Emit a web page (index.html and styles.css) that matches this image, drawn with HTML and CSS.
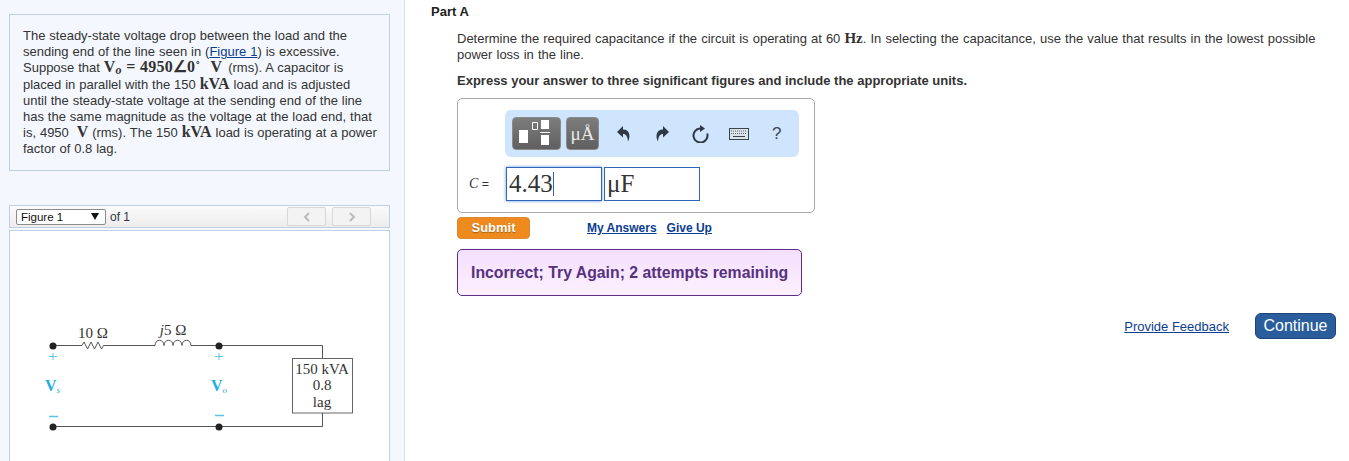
FILE: index.html
```html
<!DOCTYPE html>
<html lang="en">
<head>
<meta charset="utf-8">
<title>Part A</title>
<link rel="stylesheet" href="styles.css">
</head>
<body>
<div class="page">
  <aside class="left">
    <div class="problem">The steady-state voltage drop between the load and the<br>sending end of the line seen in (<a href="#">Figure 1</a>) is excessive.<br>Suppose that <span class="m wide-m"><b>V</b><b class="sub">o</b> = 4950∠0<sup>∘</sup>&nbsp;&nbsp;V</span> (rms). A capacitor is<br>placed in parallel with the 150 <span class="m">kVA</span> load and is adjusted<br>until the steady-state voltage at the sending end of the line<br>has the same magnitude as the voltage at the load end, that<br>is, 4950 &nbsp;<span class="m">V</span> (rms). The 150 <span class="m">kVA</span> load is operating at a power<br>factor of 0.8 lag.</div>
    <div class="figbar">
      <div class="figselect"><span>Figure 1</span><i class="caret"></i></div>
      <span class="ofone">of 1</span>
      <div class="pager">
        <span class="pagebtn"><svg width="8" height="10" viewBox="0 0 8 10"><path d="M6 1 2 5l4 4" fill="none" stroke="#bbb" stroke-width="2"/></svg></span>
        <span class="pagebtn"><svg width="8" height="10" viewBox="0 0 8 10"><path d="M2 1l4 4-4 4" fill="none" stroke="#bbb" stroke-width="2"/></svg></span>
      </div>
    </div>
    <div class="figpanel">
      <svg class="circuit" width="340" height="120" viewBox="0 0 340 120">
        <g fill="none" stroke="#555" stroke-width="1">
          <path d="M36 14.500H66l2-3.500 3.500 7 3.500-7 3.500 7 3.500-7 3.500 7 2-3.500H139"/>
          <path d="M139 14.500c0-7 9-7 9 0c0-7 9-7 9 0c0-7 9-7 9 0c0-7 9-7 9 0H306.500V27"/>
          <path d="M36 95.500H306.500V82"/>
          <rect x="276.500" y="27.500" width="60" height="54.500" stroke="#666"/>
        </g>
        <g fill="#222">
          <circle cx="37" cy="15" r="3.500"/><circle cx="203" cy="15" r="3.500"/>
          <circle cx="37" cy="96" r="3.500"/><circle cx="203" cy="96" r="3.500"/>
        </g>
        <g stroke="#5cc3e8" stroke-width="1" fill="none">
          <path d="M33 25.500h8M37 22v7M199 25.500h8M203 22v7"/>
          <path d="M33 85.500h9M199 84.500h9" stroke-width="1.500"/>
        </g>
        <g class="ctext">
          <text x="77" y="7" text-anchor="middle">10 Ω</text>
          <text x="157" y="4" text-anchor="middle"><tspan font-style="italic">j</tspan>5 Ω</text>
          <text x="306" y="43" text-anchor="middle">150 kVA</text>
          <text x="306" y="59" text-anchor="middle">0.8</text>
          <text x="306" y="76" text-anchor="middle">lag</text>
        </g>
        <g class="cvolt">
          <text x="29" y="60">V<tspan class="csub" dy="2">s</tspan></text>
          <text x="195" y="60">V<tspan class="csub" dy="2">o</tspan></text>
        </g>
      </svg>
    </div>
  </aside>
  <main class="right">
    <h2 class="parthead">Part A</h2>
    <div class="content">
      <p class="question">Determine the required capacitance if the circuit is operating at 60 <span class="hz">Hz</span>. In selecting the capacitance, use the value that results in the lowest possible power loss in the line.</p>
      <p class="express">Express your answer to three significant figures and include the appropriate units.</p>
      <div class="answerbox">
        <div class="tools">
          <span class="tbtn wide">
            <svg width="41" height="27" viewBox="0 0 41 27"><path fill="#fff" d="M3 10h9v13H3zM25 0h8v9h-8zM25 15h8v10h-8zM24 12h10v1H24z"/><path fill="none" stroke="#fff" d="M16.500 2.500h5v7h-5z"/></svg>
          </span>
          <span class="tbtn narrow">μÅ</span>
          <svg class="ticon undo" width="14" height="16" viewBox="0 0 14 16"><path fill="#2d3a45" d="M6 0 0 6l6 5.500V8c3 0 4.500 2 5 7.500 2.500-4 2.500-12-5-12z"/></svg>
          <svg class="ticon redo" width="14" height="16" viewBox="0 0 14 16"><path fill="#2d3a45" d="M8 0l6 6-6 5.500V8c-3 0-4.500 2-5 7.500-2.500-4-2.500-12 5-12z"/></svg>
          <svg class="ticon reset" width="18" height="19" viewBox="0 0 18 19"><path fill="none" stroke="#2d3a45" stroke-width="2" d="M15.200 9.500A7 7 0 1 1 8 4.550"/><path fill="#2d3a45" d="M8 1l5 3.500L8 8z"/></svg>
          <svg class="ticon keys" width="20" height="12" viewBox="0 0 20 12"><rect x=".5" y=".5" width="19" height="11" fill="#dbe3ea" stroke="#39444e"/><path stroke="#5a6670" stroke-dasharray="1 1" d="M2 3h16M2 5.500h16"/><path stroke="#39444e" d="M4 8.500h12"/></svg>
          <span class="help">?</span>
        </div>
        <div class="entry">
          <span class="varname"><i>C</i> =</span>
          <div class="field focus">4.43<i class="cursor"></i></div>
          <div class="field">μF</div>
        </div>
      </div>
      <div class="actions">
        <span class="submit">Submit</span>
        <a class="alink" href="#">My Answers</a>
        <a class="alink" href="#">Give Up</a>
      </div>
      <div class="feedback">Incorrect; Try Again; 2 attempts remaining</div>
    </div>
    <div class="bottom">
      <a class="provide" href="#">Provide Feedback</a>
      <span class="continue">Continue</span>
    </div>
  </main>
</div>
</body>
</html>
```

FILE: styles.css
```css
* { box-sizing: border-box; }
html, body { margin: 0; padding: 0; height: 100%; overflow: hidden; background: #fff; }
body { font-family: "Liberation Sans", Arial, sans-serif; font-size: 12px; color: #333; }
a { color: #0b3d91; }
.page { display: flex; height: 461px; }
.left { width: 405px; flex: none; padding: 14px 14px 0 9px; background: #f4f8fe; border-right: 1px solid #d5e0ee; }
.problem { height: 157px; padding: 13px 0 0 13px; background: #f4f8fe; border: 1px solid #bfd0e2; line-height: 16.2px; font-size: 13px; word-spacing: .3px; white-space: nowrap; }
.m { font-family: "Liberation Serif", serif; font-weight: bold; font-size: 16px; line-height: 0; }
.wide-m { margin-right: 2px; letter-spacing: .2px; }
.m b.sub { font-size: 12px; font-style: italic; position: relative; top: 2px; line-height: 0; }
.m sup { font-size: 9px; font-weight: normal; line-height: 0; }
.figbar { display: flex; align-items: center; height: 23px; margin-top: 34px; padding: 0 18px 0 6px; background: linear-gradient(#fbfbfb, #ececec); border: 1px solid #bfd0e2; }
.figselect { display: flex; align-items: center; justify-content: space-between; width: 90px; height: 16px; padding: 0 6px 0 4px; font-size: 11.5px; background: #fff; border: 1px solid #8c8c8c; border-radius: 2px; color: #111; }
.caret { border: 4px solid transparent; border-top: 7px solid #111; border-bottom: 0; }
.ofone { margin-left: 4px; color: #334; }
.pager { display: flex; gap: 6px; margin-left: auto; }
.pagebtn { display: flex; align-items: center; justify-content: center; width: 39px; height: 19px; background: #f3f3f3; border: 1px solid #d8d8d8; border-radius: 2px; }
.figpanel { height: 240px; margin-top: 2px; padding: 100px 0 0 6px; background: #fff; border: 1px solid #bfd0e2; }
.circuit { display: block; overflow: visible; }
.ctext text { font-family: "Liberation Serif", serif; font-size: 15px; fill: #333; }
.cvolt text { font-family: "Liberation Serif", serif; font-size: 16px; font-weight: bold; fill: #1eaee0; }
.cvolt .csub { font-size: 9px; font-style: italic; font-weight: normal; }
.right { flex: 1; min-width: 0; padding: 4px 13px 0 26px; }
.parthead { margin: 0; font-size: 13px; line-height: 15px; font-weight: bold; color: #222; }
.content { margin-left: 26px; padding-top: 12px; }
.question { margin: 0; font-size: 13px; line-height: 16px; width: 870px; word-spacing: .47px; }
.hz { font-family: "Liberation Serif", serif; font-weight: bold; font-size: 15px; line-height: 0; }
.express { margin: 10px 0 0; font-size: 13px; line-height: 16px; font-weight: bold; }
.answerbox { width: 358px; height: 115px; margin-top: 9px; padding: 11px 15px 0 11px; background: #fff; border: 1px solid #aaa; border-radius: 5px; }
.tools { display: flex; align-items: center; width: 294px; height: 47px; margin-left: 36px; padding: 0 7px; background: #cfe4fd; border-radius: 6px; }
.tbtn { display: flex; align-items: center; justify-content: center; height: 33px; color: #e8e8e8; background: linear-gradient(#7d7d7d, #5f5f5f); border: 1px solid #8a8a8a; border-radius: 4px; }
.tbtn.wide { width: 49px; }
.tbtn.narrow { width: 33px; margin-left: 5px; font-family: "Liberation Serif", serif; font-size: 19px; }
.ticon { flex: none; }
.undo { margin-left: 18px; }
.redo { margin-left: 24px; }
.reset { margin-left: 23px; }
.keys { margin-left: 19px; }
.help { margin-left: 23px; font-size: 17px; color: #3a4650; }
.entry { display: flex; align-items: center; margin-top: 10px; }
.varname { width: 37px; padding-right: 0; font-size: 12.5px; }
.varname i { font-family: "Liberation Serif", serif; font-size: 14px; }
.field { width: 96px; height: 34px; margin-right: 2px; padding-left: 2px; font-family: "Liberation Serif", serif; font-size: 25px; line-height: 31px; background: #fff; border: 1px solid #2f66bc; color: #333; }
.field.focus { box-shadow: 0 0 3px #5b8fe0; }
.cursor { display: inline-block; width: 1px; height: 24px; vertical-align: -4px; background: #2f66bc; }
.actions { display: flex; align-items: center; height: 22px; margin-top: 4px; }
.submit { width: 73px; height: 22px; text-align: center; font-weight: bold; font-size: 13px; line-height: 20px; color: #fff; background: #ee8a1e; border: 1px solid #d98a33; border-radius: 4px; text-shadow: 0 1px 1px #a86010; }
.alink { font-weight: bold; font-size: 12px; }
.submit + .alink { margin-left: 57px; }
.alink + .alink { margin-left: 10px; }
.feedback { width: 345px; height: 47px; margin-top: 10px; padding-left: 13px; font-size: 15.8px; font-weight: bold; line-height: 45px; color: #56317f; background: linear-gradient(#f3dffd, #fdf0ff); border: 1px solid #5f2c88; border-radius: 5px; }
.bottom { display: flex; align-items: center; justify-content: flex-end; margin-top: 17px; gap: 26px; }
.provide { font-size: 13px; }
.continue { width: 81px; height: 26px; text-align: center; font-size: 16px; line-height: 23px; color: #fff; background: #2a5d9c; border: 1px solid #1d4478; border-radius: 6px; }
```
